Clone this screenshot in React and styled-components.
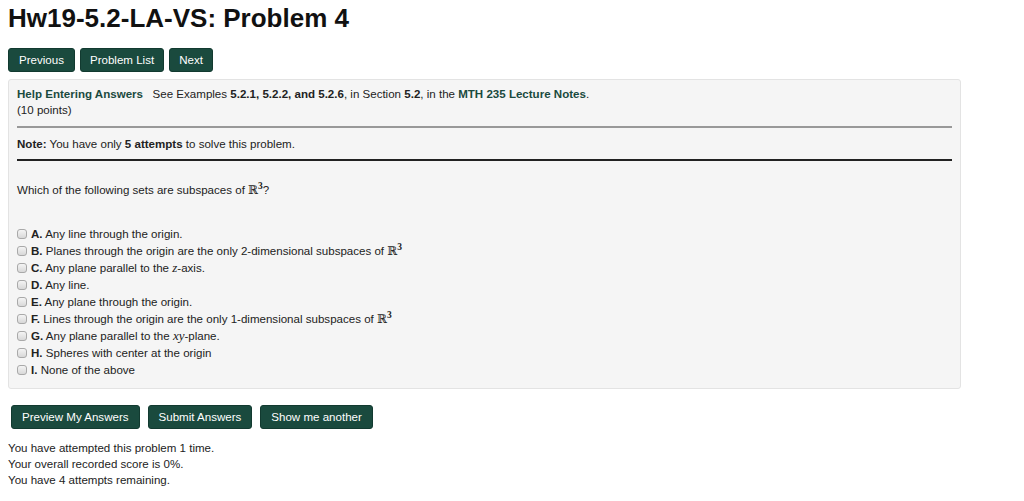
import React from 'react';
import styled, { createGlobalStyle } from 'styled-components';

const GlobalStyle = createGlobalStyle`
  body {
    margin: 0;
    padding: 0 8px;
    background: #fff;
    color: #222;
    font-family: "Liberation Sans", Arial, sans-serif;
    font-size: 11.55px;
  }
`;

const Title = styled.h1`
  margin: 0;
  padding-top: 3px;
  height: 45px;
  font-size: 26px;
  line-height: 30px;
  font-weight: bold;
  color: #111;
`;

const ButtonRow = styled.div`
  display: flex;
  gap: ${(p) => p.$gap || 5}px;
  padding-left: ${(p) => p.$indent || 0}px;
  margin-top: ${(p) => p.$top || 0}px;
`;

const Button = styled.button`
  height: 24px;
  padding: 0 ${(p) => p.$pad || 9}px;
  background: #1a4a3e;
  border: 1px solid #123a30;
  border-radius: 3px;
  color: #fff;
  font-family: "Liberation Sans", Arial, sans-serif;
  font-size: 11.55px;
  cursor: pointer;

  &:hover {
    background: #0f3a2f;
  }
`;

const Panel = styled.div`
  width: 953px;
  box-sizing: border-box;
  margin-top: 7px;
  padding: 6px 8px 10px;
  background: #f5f5f5;
  border: 1px solid #e3e3e3;
  border-radius: 3px;
`;

const Line = styled.div`
  line-height: 16px;
`;

const Link = styled.a`
  color: #1a4a3e;
  font-weight: bold;
  text-decoration: none;
`;

const Rule = styled.hr`
  margin: ${(p) => p.$top}px 0 ${(p) => p.$bottom}px;
  border: none;
  border-top: 2px solid ${(p) => p.$color};
`;

const Question = styled.div`
  line-height: 16px;
  margin-top: 21px;
  margin-bottom: 27px;
`;

const Math = styled.span`
  font-family: "DejaVu Serif", "Liberation Serif", serif;
  font-size: 12px;
`;

const MathVar = styled.i`
  font-family: "Liberation Serif", serif;
  font-size: 13px;
`;

const Sup = styled.sup`
  font-size: 9.5px;
  font-weight: bold;
  font-family: "Liberation Serif", serif;
  line-height: 0;
  vertical-align: 5px;
`;

const OptionList = styled.ul`
  list-style: none;
  margin: 0;
  padding: 0;
`;

const Option = styled.li`
  display: flex;
  align-items: center;
  height: 17px;
`;

const Check = styled.input`
  appearance: none;
  width: 10px;
  height: 10px;
  margin: 0 4px 0 0;
  border: 1px solid #a9a9a9;
  border-radius: 3px;
  background: linear-gradient(#f4f4f4, #d8d8d8);
  flex-shrink: 0;
`;

const Status = styled.div`
  margin-top: 11px;
  line-height: 16px;
`;

const R3 = () => (
  <Math>
    ℝ<Sup>3</Sup>
  </Math>
);

const options = [
  ['A.', 'Any line through the origin.'],
  ['B.', <>Planes through the origin are the only 2-dimensional subspaces of <R3 /></>],
  ['C.', <>Any plane parallel to the <MathVar>z</MathVar>-axis.</>],
  ['D.', 'Any line.'],
  ['E.', 'Any plane through the origin.'],
  ['F.', <>Lines through the origin are the only 1-dimensional subspaces of <R3 /></>],
  ['G.', <>Any plane parallel to the <MathVar>xy</MathVar>-plane.</>],
  ['H.', 'Spheres with center at the origin'],
  ['I.', 'None of the above'],
];

export default function App() {
  return (
    <>
      <GlobalStyle />
      <Title>Hw19-5.2-LA-VS: Problem 4</Title>
      <ButtonRow>
        <Button $pad={10}>Previous</Button>
        <Button>Problem List</Button>
        <Button>Next</Button>
      </ButtonRow>
      <Panel>
        <Line>
          <Link href="#">Help Entering Answers</Link>&nbsp;&nbsp; See Examples <b>5.2.1, 5.2.2, and 5.2.6</b>, in
          Section <b>5.2</b>, in the <Link href="#">MTH 235 Lecture Notes</Link>.
        </Line>
        <Line>(10 points)</Line>
        <Rule $color="#999" $top={8} $bottom={8} />
        <Line>
          <b>Note:</b> You have only <b>5 attempts</b> to solve this problem.
        </Line>
        <Rule $color="#222" $top={7} $bottom={0} />
        <Question>
          Which of the following sets are subspaces of <R3 />?
        </Question>
        <OptionList>
          {options.map(([key, text]) => (
            <Option key={key}>
              <Check type="checkbox" />
              <span>
                <b>{key}</b> {text}
              </span>
            </Option>
          ))}
        </OptionList>
      </Panel>
      <ButtonRow $indent={3} $gap={8} $top={16}>
        <Button $pad={10}>Preview My Answers</Button>
        <Button $pad={10}>Submit Answers</Button>
        <Button $pad={10}>Show me another</Button>
      </ButtonRow>
      <Status>
        <div>You have attempted this problem 1 time.</div>
        <div>Your overall recorded score is 0%.</div>
        <div>You have 4 attempts remaining.</div>
      </Status>
    </>
  );
}
